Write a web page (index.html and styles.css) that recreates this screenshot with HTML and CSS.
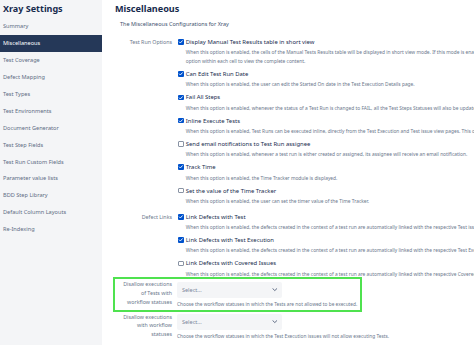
FILE: index.html
```html
<!DOCTYPE html>
<html lang="en">
<head>
<meta charset="utf-8">
<title>Xray Settings - Miscellaneous</title>
<link rel="stylesheet" href="styles.css">
</head>
<body>
<div class="page">
  <aside class="sidebar">
    <h1 class="side-title">Xray Settings</h1>
    <nav class="side-nav">
      <a class="nav-item">Summary</a>
      <a class="nav-item active">Miscellaneous</a>
      <a class="nav-item">Test Coverage</a>
      <a class="nav-item">Defect Mapping</a>
      <a class="nav-item">Test Types</a>
      <a class="nav-item">Test Environments</a>
      <a class="nav-item">Document Generator</a>
      <a class="nav-item">Test Step Fields</a>
      <a class="nav-item">Test Run Custom Fields</a>
      <a class="nav-item">Parameter value lists</a>
      <a class="nav-item">BDD Step Library</a>
      <a class="nav-item">Default Column Layouts</a>
      <a class="nav-item">Re-Indexing</a>
    </nav>
  </aside>

  <main class="main">
    <h2 class="page-title">Miscellaneous</h2>
    <p class="subtitle">The Miscellaneous Configurations for Xray</p>

    <section class="form-row">
      <div class="row-label">Test Run Options</div>
      <div class="row-controls">
        <div class="option">
          <div class="opt-label"><span class="cb on"><svg viewBox="0 0 10 10"><path d="M2.3 5.2 L4.2 7.1 L7.8 3.1"/></svg></span>Display Manual Test Results table in short view</div>
          <div class="opt-desc">When this option is enabled, the cells of the Manual Tests Results table will be displayed in short view mode. If this mode is enabled, the user can click on the expand<br>option within each cell to view the complete content.</div>
        </div>
        <div class="option">
          <div class="opt-label"><span class="cb on"><svg viewBox="0 0 10 10"><path d="M2.3 5.2 L4.2 7.1 L7.8 3.1"/></svg></span>Can Edit Test Run Date</div>
          <div class="opt-desc">When this option is enabled, the user can edit the Started On date in the Test Execution Details page.</div>
        </div>
        <div class="option">
          <div class="opt-label"><span class="cb on"><svg viewBox="0 0 10 10"><path d="M2.3 5.2 L4.2 7.1 L7.8 3.1"/></svg></span>Fail All Steps</div>
          <div class="opt-desc">When this option is enabled, whenever the status of a Test Run is changed to FAIL, all the Test Steps Statuses will also be updated to FAIL.</div>
        </div>
        <div class="option">
          <div class="opt-label"><span class="cb on"><svg viewBox="0 0 10 10"><path d="M2.3 5.2 L4.2 7.1 L7.8 3.1"/></svg></span>Inline Execute Tests</div>
          <div class="opt-desc">When this option is enabled, Test Runs can be executed inline, directly from the Test Execution and Test issue view pages. This option is only available for Manual Tests.</div>
        </div>
        <div class="option">
          <div class="opt-label"><span class="cb"></span>Send email notifications to Test Run assignee</div>
          <div class="opt-desc">When this option is enabled, whenever a test run is either created or assigned, its assignee will receive an email notification.</div>
        </div>
        <div class="option">
          <div class="opt-label"><span class="cb on"><svg viewBox="0 0 10 10"><path d="M2.3 5.2 L4.2 7.1 L7.8 3.1"/></svg></span>Track Time</div>
          <div class="opt-desc">When this option is enabled, the Time Tracker module is displayed.</div>
        </div>
        <div class="option">
          <div class="opt-label"><span class="cb"></span>Set the value of the Time Tracker</div>
          <div class="opt-desc">When this option is enabled, the user can set the timer value of the Time Tracker.</div>
        </div>
      </div>
    </section>

    <section class="form-row">
      <div class="row-label">Defect Links</div>
      <div class="row-controls">
        <div class="option">
          <div class="opt-label"><span class="cb on"><svg viewBox="0 0 10 10"><path d="M2.3 5.2 L4.2 7.1 L7.8 3.1"/></svg></span>Link Defects with Test</div>
          <div class="opt-desc">When this option is enabled, the defects created in the context of a test run are automatically linked with the respective Test issue.</div>
        </div>
        <div class="option">
          <div class="opt-label"><span class="cb on"><svg viewBox="0 0 10 10"><path d="M2.3 5.2 L4.2 7.1 L7.8 3.1"/></svg></span>Link Defects with Test Execution</div>
          <div class="opt-desc">When this option is enabled, the defects created in the context of a test run are automatically linked with the respective Test Execution issue.</div>
        </div>
        <div class="option last">
          <div class="opt-label"><span class="cb"></span>Link Defects with Covered Issues</div>
          <div class="opt-desc">When this option is enabled, the defects created in the context of a test run are automatically linked with the respective Covered Issues.</div>
        </div>
      </div>
    </section>

    <section class="select-row highlight">
      <div class="row-label multi">Disallow executions of Tests with workflow statuses</div>
      <div class="row-controls">
        <div class="select"><span class="placeholder">Select...</span><svg class="chev" viewBox="0 0 10 6"><path d="M1.5 1.2 L5 4.6 L8.5 1.2"/></svg></div>
        <div class="sel-desc">Choose the workflow statuses in which the Tests are not allowed to be executed.</div>
      </div>
    </section>

    <section class="select-row">
      <div class="row-label multi">Disallow executions with workflow statuses</div>
      <div class="row-controls">
        <div class="select"><span class="placeholder">Select...</span><svg class="chev" viewBox="0 0 10 6"><path d="M1.5 1.2 L5 4.6 L8.5 1.2"/></svg></div>
        <div class="sel-desc">Choose the workflow statuses in which the Test Execution issues will not allow executing Tests.</div>
      </div>
    </section>
  </main>
</div>
</body>
</html>
```

FILE: styles.css
```css
html, body {
  margin: 0;
  padding: 0;
  background: #ffffff;
}

body {
  width: 474px;
  height: 348px;
  overflow: hidden;
  font-family: "Noto Sans", "Open Sans", "DejaVu Sans", sans-serif;
  color: #172b4d;
}

.page {
  display: flex;
  align-items: flex-start;
  width: 474px;
  height: 348px;
  overflow: hidden;
}

/* Sidebar */
.sidebar {
  flex: 0 0 102px;
  width: 102px;
  height: 345px;
  background: #f4f5f7;
}

.side-title {
  margin: 0;
  height: 18px;
  padding-left: 3px;
  font-size: 9px;
  line-height: 18px;
  font-weight: 700;
  color: #172b4d;
  white-space: nowrap;
}

.side-nav {
  display: flex;
  flex-direction: column;
}

.nav-item {
  display: flex;
  align-items: center;
  height: 16.9px;
  padding-left: 3px;
  font-size: 5.6px;
  color: #5e6c84;
  white-space: nowrap;
}

.nav-item.active {
  background: #253858;
  color: #ffffff;
}

/* Main */
.main {
  flex: 1 1 auto;
  min-width: 0;
  padding-left: 13px;
  overflow: hidden;
}

.page-title {
  margin: 0;
  font-size: 9.1px;
  line-height: 18px;
  font-weight: 700;
  color: #172b4d;
  white-space: nowrap;
}

.subtitle {
  margin: 2px 0 0 5px;
  font-size: 5.5px;
  line-height: 9px;
  color: #42526e;
  white-space: nowrap;
}

.form-row {
  display: grid;
  grid-template-columns: 57px 1fr;
  column-gap: 5px;
  margin-top: 7.8px;
}

.form-row + .form-row {
  margin-top: 3px;
}

.row-label {
  text-align: right;
  font-size: 5.3px;
  line-height: 10px;
  color: #6b778c;
}

.row-label.multi {
  line-height: 8.8px;
  padding-left: 4px;
}

.row-controls {
  display: flex;
  flex-direction: column;
  min-width: 0;
}

.option {
  display: flex;
  flex-direction: column;
  margin-bottom: 3px;
}

.option.last {
  margin-bottom: 0;
}

.opt-label {
  display: flex;
  align-items: center;
  height: 10px;
  font-size: 5.9px;
  color: #172b4d;
  white-space: nowrap;
}

.cb {
  flex: 0 0 auto;
  box-sizing: border-box;
  width: 5.6px;
  height: 5.6px;
  margin: 0 2.2px 0 1px;
  border: 0.6px solid #8993a4;
  border-radius: 1px;
  background: #ffffff;
  display: flex;
}

.cb.on {
  border: none;
  background: #0052cc;
}

.cb svg {
  width: 100%;
  height: 100%;
}

.cb svg path {
  fill: none;
  stroke: #ffffff;
  stroke-width: 1.6;
  stroke-linecap: round;
  stroke-linejoin: round;
}

.opt-desc {
  margin-top: 1.3px;
  padding-left: 8.8px;
  font-size: 4.85px;
  line-height: 9px;
  color: #6b778c;
  white-space: nowrap;
}

/* Select rows */
.select-row {
  display: grid;
  grid-template-columns: 57px 1fr;
  column-gap: 5px;
  padding-top: 1px;
}

.select-row.highlight {
  box-sizing: border-box;
  width: 249px;
  height: 34.3px;
  margin-left: -2px;
  margin-top: -1.5px;
  border: 2px solid #4fe24f;
  padding-top: 1.2px;
}

.select {
  box-sizing: border-box;
  display: flex;
  align-items: center;
  justify-content: space-between;
  width: 105px;
  height: 16.7px;
  margin-top: 1.2px;
  padding: 0 4px 0 5px;
  background: #f4f5f7;
  border-radius: 2px;
}

.placeholder {
  font-size: 5.5px;
  color: #7a869a;
}

.chev {
  width: 5.6px;
  height: 3.4px;
}

.chev path {
  fill: none;
  stroke: #42526e;
  stroke-width: 1.5;
  stroke-linecap: round;
  stroke-linejoin: round;
}

.sel-desc {
  margin-top: 2px;
  font-size: 4.8px;
  line-height: 9px;
  color: #6b778c;
  white-space: nowrap;
}
```
